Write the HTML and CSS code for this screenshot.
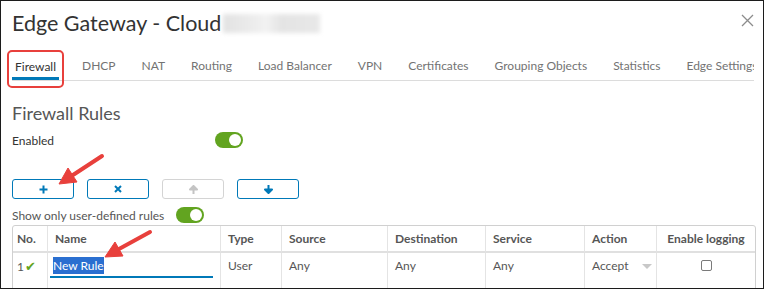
FILE: index.html
```html
<!DOCTYPE html>
<html lang="en">
<head>
    <meta charset="UTF-8">
    <meta name="viewport" content="width=device-width, initial-scale=1.0">
    <title>Edge Gateway - Firewall</title>
    <link rel="stylesheet" href="styles.css">
</head>
<body>
    <div class="frame">
        <div class="dialog-header">
            <h1>Edge Gateway - Cloud<span class="redacted"></span></h1>
            <button class="close-btn" aria-label="Close">
                <svg width="13" height="13" viewBox="0 0 13 13"><path d="M1 1L12 12M12 1L1 12" stroke="#8c8c8c" stroke-width="1.3" fill="none"/></svg>
            </button>
        </div>

        <ul class="tabs">
            <li class="tab active">Firewall</li>
            <li class="tab">DHCP</li>
            <li class="tab">NAT</li>
            <li class="tab">Routing</li>
            <li class="tab">Load Balancer</li>
            <li class="tab">VPN</li>
            <li class="tab">Certificates</li>
            <li class="tab">Grouping Objects</li>
            <li class="tab">Statistics</li>
            <li class="tab">Edge Settings</li>
        </ul>

        <h2>Firewall Rules</h2>

        <div class="enabled-row">
            <span class="label">Enabled</span>
            <span class="toggle"></span>
        </div>

        <div class="toolbar">
            <button class="btn">
                <svg width="9" height="9" viewBox="0 0 9 9"><path d="M4.5 0.5V8.5M0.5 4.5H8.5" stroke="currentColor" stroke-width="2"/></svg>
            </button>
            <button class="btn">
                <svg width="8" height="8" viewBox="0 0 8 8"><path d="M1 1L7 7M7 1L1 7" stroke="currentColor" stroke-width="2"/></svg>
            </button>
            <button class="btn disabled">
                <svg width="9" height="9" viewBox="0 0 9 9"><path d="M4.5 9V3M1 4.5L4.5 1L8 4.5Z" stroke="currentColor" stroke-width="2" fill="currentColor" stroke-linejoin="round"/></svg>
            </button>
            <button class="btn">
                <svg width="9" height="9" viewBox="0 0 9 9"><path d="M4.5 0V6M1 4.5L4.5 8L8 4.5Z" stroke="currentColor" stroke-width="2" fill="currentColor" stroke-linejoin="round"/></svg>
            </button>
        </div>

        <div class="filter-row">
            <span class="label">Show only user-defined rules</span>
            <span class="toggle"></span>
        </div>

        <table class="rules">
            <colgroup>
                <col style="width: 34px">
                <col style="width: 173px">
                <col style="width: 61px">
                <col style="width: 106px">
                <col style="width: 98px">
                <col style="width: 99px">
                <col style="width: 72px">
                <col style="width: 99px">
            </colgroup>
            <thead>
                <tr>
                    <th>No.</th>
                    <th>Name</th>
                    <th>Type</th>
                    <th>Source</th>
                    <th>Destination</th>
                    <th>Service</th>
                    <th>Action</th>
                    <th class="center">Enable logging</th>
                </tr>
            </thead>
            <tbody>
                <tr>
                    <td class="num">1<span class="check">&#10004;</span></td>
                    <td><div class="name-input"><span class="selected">New Rule</span></div></td>
                    <td>User</td>
                    <td>Any</td>
                    <td>Any</td>
                    <td>Any</td>
                    <td>Accept<span class="caret"></span></td>
                    <td class="center"><span class="checkbox"></span></td>
                </tr>
            </tbody>
        </table>

        <!-- screenshot annotations -->
        <div class="highlight-box"></div>
        <svg class="arrows" width="764" height="289" viewBox="0 0 764 289">
            <g fill="#e8403c" stroke="#e8403c" stroke-linejoin="round">
                <line x1="102" y1="156" x2="73" y2="175" stroke-width="4" stroke-linecap="round"/>
                <polygon points="59,184 77,182 68,168" stroke-width="1"/>
                <line x1="150" y1="232" x2="119" y2="249" stroke-width="4" stroke-linecap="round"/>
                <polygon points="105,257 123,256 115,242" stroke-width="1"/>
            </g>
        </svg>
    </div>
</body>
</html>
```

FILE: styles.css
```css
* {
    margin: 0;
    padding: 0;
    box-sizing: border-box;
}

body {
    font-family: Lato, 'Open Sans', sans-serif;
    background: white;
    color: #565656;
}

.frame {
    position: relative;
    width: 764px;
    height: 289px;
    border: 1px solid #1c1c1c;
    padding: 0 9px 0 11px;
    overflow: hidden;
    background: white;
}

.dialog-header {
    display: flex;
    justify-content: space-between;
    align-items: flex-start;
    height: 51px;
    padding-top: 9px;
}

h1 {
    font-weight: 400;
    font-size: 21.5px;
    line-height: 26px;
    color: #333;
    display: flex;
    align-items: center;
}

.redacted {
    display: inline-block;
    width: 97px;
    height: 19px;
    margin-left: 2px;
    background: linear-gradient(90deg, #e2e2e2, #ececec 30%, #f2f2f2 45%, #e4e4e4 60%, #e8e8e8);
    filter: blur(2px);
}

.close-btn {
    border: none;
    background: none;
    margin-top: 4px;
    margin-right: 0;
    width: 13px;
    height: 13px;
}

.tabs {
    list-style: none;
    display: flex;
    gap: 20px;
    border-bottom: 1px solid #dcdcdc;
    height: 29px;
    white-space: nowrap;
    overflow: hidden;
}

.tab {
    font-size: 12px;
    line-height: 28px;
    padding: 0 3px;
    color: #737373;
}

.tab.active {
    color: #333;
    border-bottom: 3px solid #0079b8;
    line-height: 26px;
    height: 28px;
    padding-top: 2px;
}

h2 {
    font-weight: 400;
    font-size: 18px;
    line-height: 22px;
    color: #565656;
    margin-top: 21px;
}

.enabled-row {
    display: flex;
    align-items: center;
    margin-top: 8px;
    height: 16px;
}

.label {
    font-size: 12px;
    color: #333;
}

.enabled-row .label {
    width: 203px;
}

.toggle {
    position: relative;
    display: inline-block;
    width: 28px;
    height: 16px;
    border-radius: 8px;
    background: #62a420;
}

.toggle::after {
    content: "";
    position: absolute;
    right: 2px;
    top: 2px;
    width: 12px;
    height: 12px;
    border-radius: 50%;
    background: white;
}

.toolbar {
    display: flex;
    gap: 13px;
    margin-top: 31px;
}

.btn {
    width: 62px;
    height: 20px;
    border: 1px solid #0079b8;
    border-radius: 3px;
    background: white;
    color: #0079b8;
    display: flex;
    align-items: center;
    justify-content: center;
}

.btn.disabled {
    border-color: #d4d4d4;
    color: #c4c4c4;
}

.filter-row {
    display: flex;
    align-items: center;
    gap: 12px;
    margin-top: 8px;
    height: 16px;
}

.filter-row .label {
    color: #565656;
}

.rules {
    margin-top: 2px;
    width: 742px;
    border-collapse: separate;
    border-spacing: 0;
    table-layout: fixed;
    border: 1px solid #d0d0d0;
    border-radius: 3px 3px 0 0;
    font-size: 12px;
}

.rules th {
    font-weight: 700;
    color: #565656;
    text-align: left;
    height: 27px;
    padding: 0 7px;
    border-bottom: 2px solid #e0e0e0;
    border-left: 1px solid #e4e4e4;
    white-space: nowrap;
}

.rules td {
    color: #565656;
    height: 40px;
    vertical-align: top;
    padding: 5px 7px 0;
    border-left: 1px solid #e4e4e4;
    white-space: nowrap;
}

.rules th:first-child,
.rules td:first-child {
    border-left: none;
    padding-left: 4px;
}

.rules .center {
    text-align: center;
}

.num {
    color: #c8803a;
}

.check {
    color: #62a420;
    font-size: 13px;
    margin-left: 1px;
}

.name-input {
    border-bottom: 2px solid #0079b8;
    margin: 0 0 0 -5px;
    padding: 0 0 1px 3px;
    height: 20px;
}

.selected {
    background: #2a6fd0;
    color: white;
    padding: 1px 0;
}

.caret {
    display: inline-block;
    margin-left: 13px;
    border-left: 5px solid transparent;
    border-right: 5px solid transparent;
    border-top: 5px solid #c8c8c8;
    vertical-align: middle;
}

.checkbox {
    display: inline-block;
    width: 11px;
    height: 11px;
    border: 1px solid #7a7a7a;
    border-radius: 2px;
    margin-top: 2px;
}

.highlight-box {
    position: absolute;
    left: 6px;
    top: 49px;
    width: 57px;
    height: 38px;
    border: 2px solid #e8403c;
    border-radius: 5px;
}

.arrows {
    position: absolute;
    left: -1px;
    top: -1px;
    pointer-events: none;
}
```
